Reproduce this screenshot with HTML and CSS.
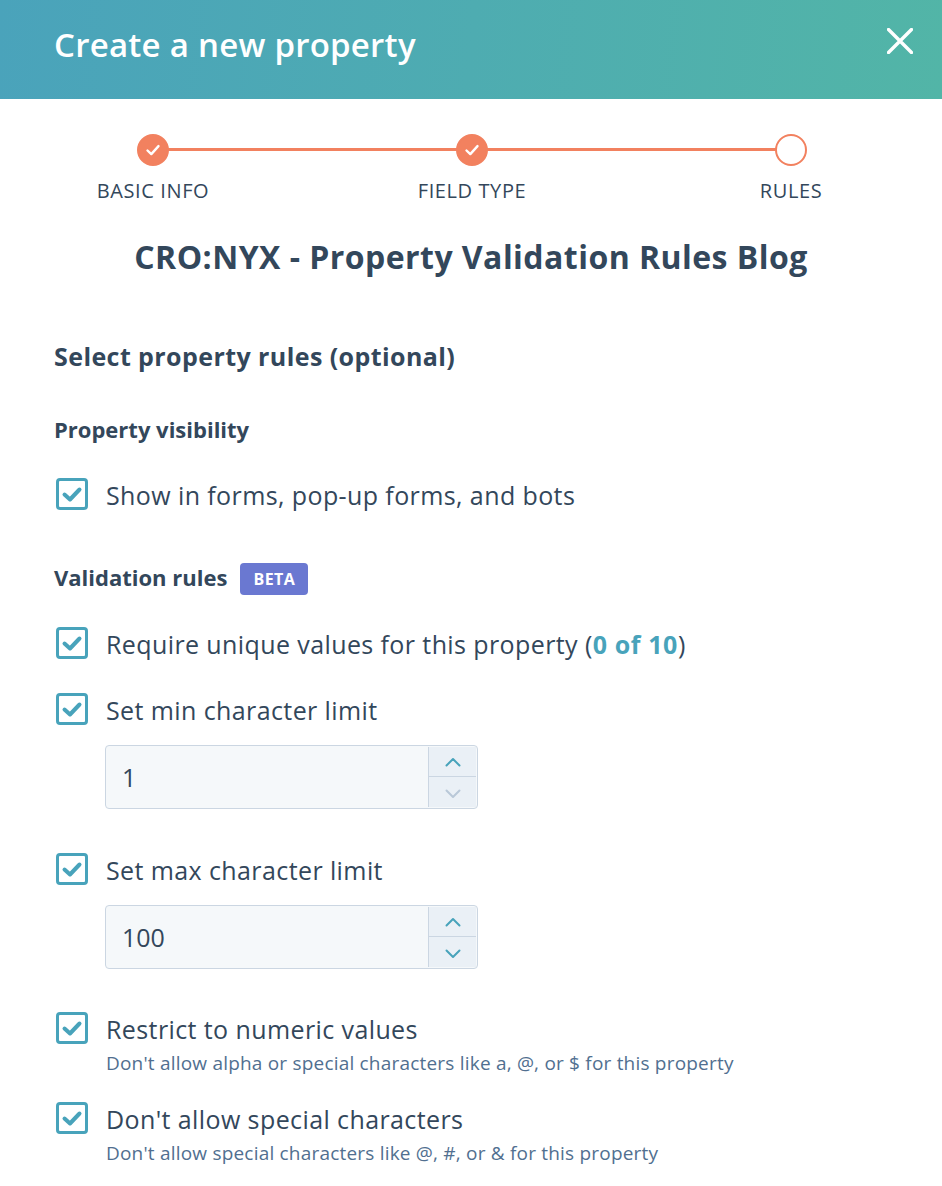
FILE: index.html
```html
<!DOCTYPE html>
<html lang="en">
<head>
    <meta charset="UTF-8">
    <title>Create a new property</title>
    <link rel="stylesheet" href="styles.css">
</head>
<body>

    <div class="header">
        <h1>Create a new property</h1>
        <svg class="close" viewBox="0 0 26 26"><path d="M1.5 1.5l23 23M24.5 1.5l-23 23"/></svg>
    </div>

    <div class="stepper">
        <div class="step">
            <span class="dot done"><svg viewBox="0 0 16 16"><path d="M2.5 8.5l3.8 3.6 7.2-8"/></svg></span>
            <span class="step-label">BASIC INFO</span>
        </div>
        <div class="step">
            <span class="dot done"><svg viewBox="0 0 16 16"><path d="M2.5 8.5l3.8 3.6 7.2-8"/></svg></span>
            <span class="step-label">FIELD TYPE</span>
        </div>
        <div class="step">
            <span class="dot"></span>
            <span class="step-label">RULES</span>
        </div>
    </div>

    <h2 class="title">CRO:NYX - Property Validation Rules Blog</h2>

    <div class="content">
        <h3 class="section-head">Select property rules (optional)</h3>

        <h4 class="group-head">Property visibility</h4>
        <div class="check-row">
            <span class="box"><svg viewBox="0 0 32 32"><path d="M8.5 16.5l5.5 5 9.5-10"/></svg></span>
            <div class="check-text">Show in forms, pop-up forms, and bots</div>
        </div>

        <div class="validation-head">
            <h4>Validation rules</h4>
            <span class="badge">BETA</span>
        </div>

        <div class="check-row first">
            <span class="box"><svg viewBox="0 0 32 32"><path d="M8.5 16.5l5.5 5 9.5-10"/></svg></span>
            <div class="check-text">Require unique values for this property (<a class="link">0 of 10</a>)</div>
        </div>

        <div class="check-row tight">
            <span class="box"><svg viewBox="0 0 32 32"><path d="M8.5 16.5l5.5 5 9.5-10"/></svg></span>
            <div class="check-text">Set min character limit</div>
        </div>
        <div class="number-input">
            <span class="value">1</span>
            <div class="spin">
                <span class="spin-btn"><svg viewBox="0 0 16 10"><path d="M1.5 8.5L8 2l6.5 6.5"/></svg></span>
                <span class="spin-btn off"><svg viewBox="0 0 16 10"><path d="M1.5 1.5L8 8l6.5-6.5"/></svg></span>
            </div>
        </div>

        <div class="check-row after-input">
            <span class="box"><svg viewBox="0 0 32 32"><path d="M8.5 16.5l5.5 5 9.5-10"/></svg></span>
            <div class="check-text">Set max character limit</div>
        </div>
        <div class="number-input">
            <span class="value">100</span>
            <div class="spin">
                <span class="spin-btn"><svg viewBox="0 0 16 10"><path d="M1.5 8.5L8 2l6.5 6.5"/></svg></span>
                <span class="spin-btn"><svg viewBox="0 0 16 10"><path d="M1.5 1.5L8 8l6.5-6.5"/></svg></span>
            </div>
        </div>

        <div class="check-row after-input wide">
            <span class="box"><svg viewBox="0 0 32 32"><path d="M8.5 16.5l5.5 5 9.5-10"/></svg></span>
            <div class="check-text">
                Restrict to numeric values
                <p class="help">Don't allow alpha or special characters like a, @, or $ for this property</p>
            </div>
        </div>

        <div class="check-row last">
            <span class="box"><svg viewBox="0 0 32 32"><path d="M8.5 16.5l5.5 5 9.5-10"/></svg></span>
            <div class="check-text">
                Don't allow special characters
                <p class="help">Don't allow special characters like @, #, or &amp; for this property</p>
            </div>
        </div>
    </div>

</body>
</html>
```

FILE: styles.css
```css
body {
    margin: 0;
    font-family: "Open Sans", "Noto Sans", sans-serif;
    color: #33475b;
    background-color: #fff;
    overflow: hidden;
}

h1, h2, h3, h4, p {
    margin: 0;
}

.header {
    height: 99px;
    padding: 0 29px 0 54px;
    display: flex;
    justify-content: space-between;
    align-items: flex-start;
    background: linear-gradient(95deg, #4aa3bb 0%, #52b5a7 100%);
}

.header h1 {
    margin-top: 25px;
    font-size: 33px;
    line-height: 40px;
    font-weight: 600;
    letter-spacing: 0.25px;
    color: #fff;
}

.close {
    width: 26px;
    height: 26px;
    margin-top: 28px;
}

.close path {
    fill: none;
    stroke: #fff;
    stroke-width: 3.4;
    stroke-linecap: round;
}

/* stepper */
.stepper {
    position: relative;
    margin-top: 35px;
    padding: 0 91px 0 93px;
    display: flex;
    justify-content: space-between;
}

.stepper::before {
    content: "";
    position: absolute;
    top: 14px;
    left: 153px;
    right: 151px;
    height: 3px;
    background-color: #f2815f;
}

.step {
    width: 120px;
    display: flex;
    flex-direction: column;
    align-items: center;
    gap: 13px;
}

.dot {
    position: relative;
    box-sizing: border-box;
    width: 32px;
    height: 32px;
    border: 2px solid #f2815f;
    border-radius: 50%;
    background-color: #fff;
    display: flex;
    align-items: center;
    justify-content: center;
}

.dot.done {
    background-color: #f2815f;
}

.dot svg {
    width: 16px;
    height: 16px;
}

.dot path {
    fill: none;
    stroke: #fff;
    stroke-width: 2.4;
    stroke-linecap: round;
    stroke-linejoin: round;
}

.step-label {
    font-size: 20px;
    line-height: 24px;
    letter-spacing: 0.6px;
    white-space: nowrap;
}

.title {
    margin-top: 34px;
    text-align: center;
    font-size: 32px;
    line-height: 40px;
    font-weight: 700;
    letter-spacing: 0.46px;
}

.content {
    padding: 0 54px;
}

.section-head {
    margin-top: 64px;
    font-size: 25px;
    line-height: 30px;
    font-weight: 700;
    letter-spacing: 0.42px;
}

.group-head,
.validation-head h4 {
    font-size: 22px;
    line-height: 26px;
    font-weight: 700;
}

.group-head {
    margin-top: 45px;
}

.validation-head {
    margin-top: 49px;
    display: flex;
    align-items: center;
    gap: 13px;
}

.validation-head h4 {
    position: relative;
    top: -2px;
}

.badge {
    width: 68px;
    height: 32px;
    border-radius: 4px;
    background-color: #6a78d1;
    color: #fff;
    font-size: 16px;
    font-weight: 700;
    letter-spacing: 0.5px;
    display: flex;
    align-items: center;
    justify-content: center;
}

.check-row {
    margin-top: 36px;
    padding: 0 0 2px 2px;
    display: flex;
    align-items: flex-start;
    gap: 18px;
}

.check-row.first { margin-top: 32px; }
.check-row.tight { margin-top: 30px; }
.check-row.after-input { margin-top: 44px; }
.check-row.wide { margin-top: 43px; }
.check-row.last { margin-top: 25px; }

.box {
    flex: none;
    box-sizing: border-box;
    width: 32px;
    height: 32px;
    border: 3px solid #48a3bb;
    border-radius: 4px;
    display: flex;
    align-items: center;
    justify-content: center;
}

.box svg {
    width: 32px;
    height: 32px;
    flex: none;
}

.box path {
    fill: none;
    stroke: #48a3bb;
    stroke-width: 4;
    stroke-linecap: round;
    stroke-linejoin: round;
}

.check-text {
    font-size: 25px;
    line-height: 34px;
    letter-spacing: 0.4px;
}

.link {
    color: #48a3bb;
    font-weight: 700;
    letter-spacing: 0.6px;
}

.help {
    margin-top: 5px;
    font-size: 19px;
    line-height: 24px;
    letter-spacing: 0.2px;
    color: #516f90;
}

.number-input {
    box-sizing: border-box;
    width: 373px;
    height: 64px;
    margin: 16px 0 0 51px;
    border: 1px solid #cbd6e2;
    border-radius: 4px;
    background-color: #f5f8fa;
    display: flex;
    justify-content: space-between;
    align-items: center;
}

.value {
    padding-left: 16px;
    font-size: 25px;
}

.spin {
    width: 47px;
    height: 60px;
    margin-right: 1px;
    border-left: 1px solid #cbd6e2;
    background-color: #eaf0f6;
    display: flex;
    flex-direction: column;
}

.spin-btn {
    height: 29px;
    display: flex;
    align-items: center;
    justify-content: center;
}

.spin-btn + .spin-btn {
    box-sizing: border-box;
    height: 31px;
    padding-top: 3px;
    border-top: 1px solid #cbd6e2;
}

.spin-btn svg {
    width: 16px;
    height: 10px;
}

.spin-btn path {
    fill: none;
    stroke: #48a3bb;
    stroke-width: 2;
    stroke-linecap: round;
    stroke-linejoin: round;
}

.spin-btn.off path {
    stroke: #b9c8d8;
}
```
